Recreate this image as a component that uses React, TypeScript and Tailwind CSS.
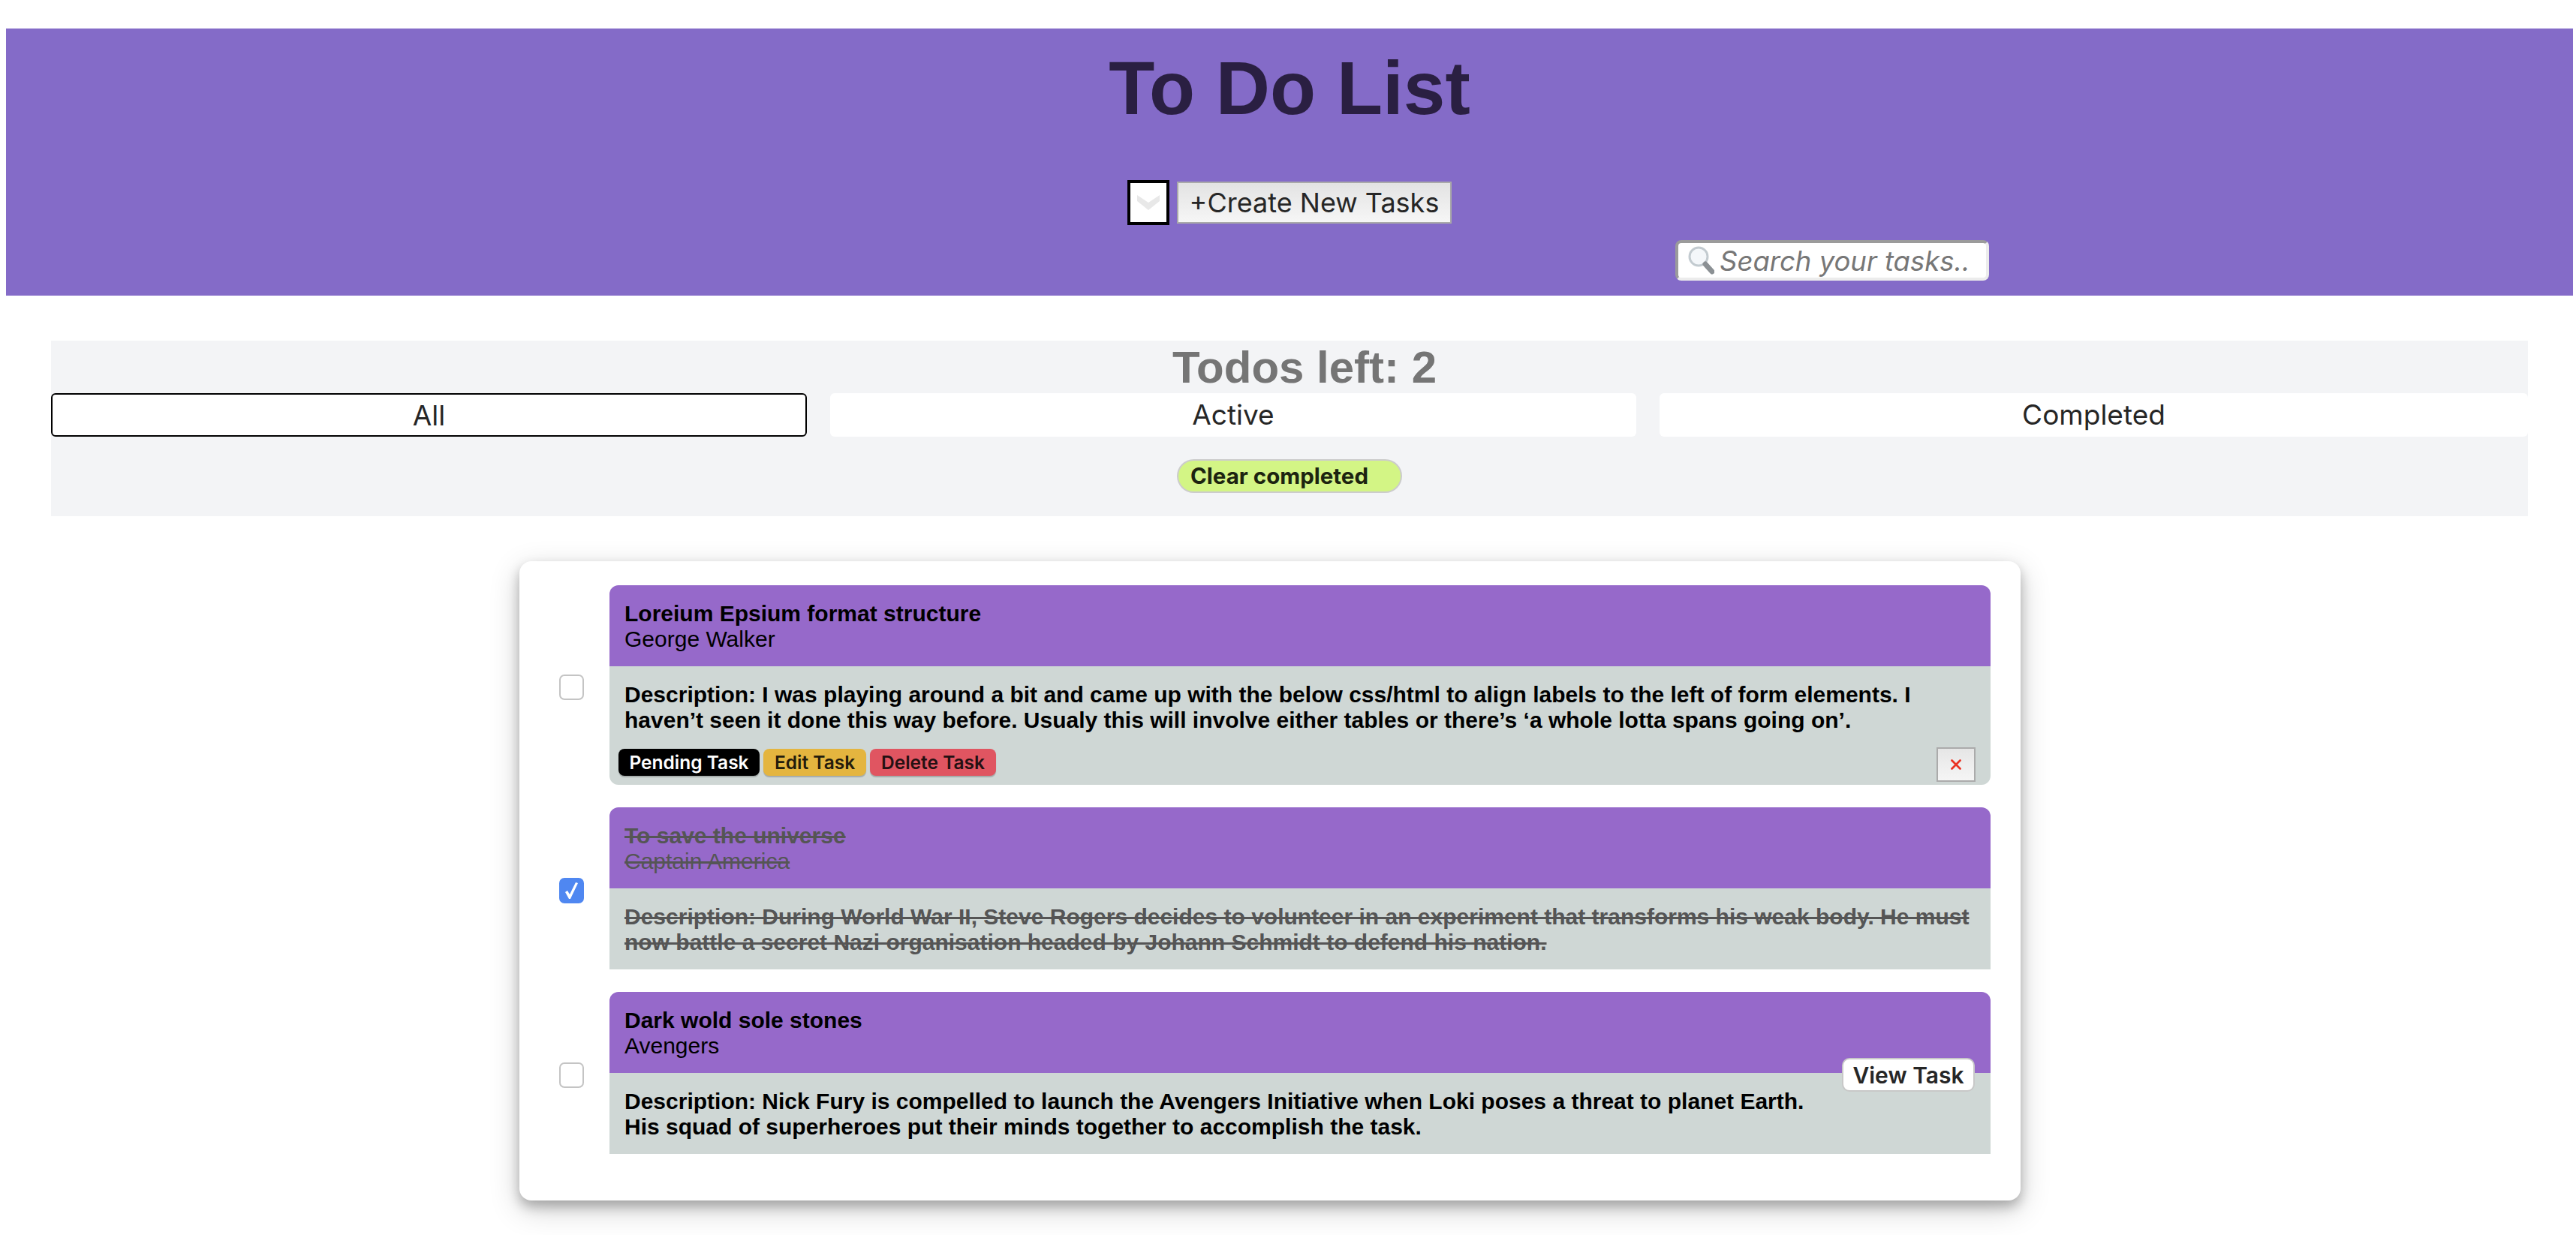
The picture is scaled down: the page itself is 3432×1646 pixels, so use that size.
import React from 'react';
import { X } from 'lucide-react';

const SearchGlass = () => (
    <svg width="36" height="38" viewBox="0 0 36 38" className="shrink-0">
        <circle cx="15" cy="14" r="12" fill="#f4f7fa" stroke="#c3cbd0" strokeWidth="3" />
        <path d="M24 24 L33 34" stroke="#8b9094" strokeWidth="7" strokeLinecap="round" />
    </svg>
);

type Task = {
    title: string;
    author: string;
    lines: string[];
    done?: boolean;
};

const tasks: Task[] = [
    {
        title: 'Loreium Epsium format structure',
        author: 'George Walker',
        lines: [
            'Description: I was playing around a bit and came up with the below css/html to align labels to the left of form elements. I',
            'haven’t seen it done this way before. Usualy this will involve either tables or there’s ‘a whole lotta spans going on’.',
        ],
    },
    {
        title: 'To save the universe',
        author: 'Captain America',
        done: true,
        lines: [
            'Description: During World War II, Steve Rogers decides to volunteer in an experiment that transforms his weak body. He must',
            'now battle a secret Nazi organisation headed by Johann Schmidt to defend his nation.',
        ],
    },
    {
        title: 'Dark wold sole stones',
        author: 'Avengers',
        lines: [
            'Description: Nick Fury is compelled to launch the Avengers Initiative when Loki poses a threat to planet Earth.',
            'His squad of superheroes put their minds together to accomplish the task.',
        ],
    },
];

const TaskRow: React.FC<{ task: Task; index: number }> = ({ task, index }) => {
    const textClass = task.done ? 'line-through text-[#555555]' : 'text-black';

    return (
        <div className="flex items-center">
            <div className="w-[120px] flex pl-[53px] pt-[6px]">
                {task.done ? (
                    <span className="w-[33px] h-[34px] rounded-[7px] bg-[#4f87f1] flex items-center justify-center">
                        <svg width="33" height="34" viewBox="0 0 33 34">
                            <path d="M8 19 L11 17 L14 22 L22 6 L25 7 L15 28 L13 28 Z" fill="#ffffff" />
                        </svg>
                    </span>
                ) : (
                    <span className="w-[33px] h-[34px] rounded-[7px] bg-white border-2 border-[#c4c4c4]" />
                )}
            </div>
            <div className="relative w-[1840px]">
                <div className={`bg-[#9669ca] rounded-t-[12px] h-[108px] pl-[20px] pt-[21px] text-[30px] leading-[34px] ${textClass}`}>
                    <div className="font-bold">{task.title}</div>
                    <div>{task.author}</div>
                </div>
                <div className={`bg-[#cfd7d5] ${index === 0 ? 'rounded-b-[12px] h-[158px]' : 'h-[108px]'} pl-[20px] pt-[21px] text-[30px] leading-[34px] font-bold ${textClass}`}>
                    {task.lines.map((line) => (
                        <div key={line} className="whitespace-nowrap">{line}</div>
                    ))}
                    {index === 0 && (
                        <div className="flex gap-[5px] mt-[21px] -ml-[8px] font-['Inter',sans-serif] text-[24.5px] leading-[36px] font-semibold">
                            <button className="w-[188px] h-[36px] rounded-[8px] bg-black text-white shadow-[0_2px_1px_rgba(0,0,0,0.2)]">Pending Task</button>
                            <button className="w-[137px] h-[36px] rounded-[8px] bg-[#e4b53f] text-[#241c0c] shadow-[0_2px_1px_rgba(0,0,0,0.2)]">Edit Task</button>
                            <button className="w-[168px] h-[36px] rounded-[8px] bg-[#e05561] text-[#241012] shadow-[0_2px_1px_rgba(0,0,0,0.2)]">Delete Task</button>
                        </div>
                    )}
                </div>
                {index === 0 && (
                    <button className="absolute right-[20px] bottom-[4px] w-[52px] h-[46px] border-2 border-[#ababab] bg-gradient-to-b from-[#e6e6e6] to-[#f5f5f5] flex items-center justify-center">
                        <X className="w-[22px] h-[22px] text-[#ea3323]" strokeWidth={3} />
                    </button>
                )}
                {index === 2 && (
                    <button className="absolute right-[21px] top-[88px] w-[177px] h-[45px] rounded-[10px] border-2 border-[#c8c8c8] bg-white font-['Inter',sans-serif] text-[30px] leading-none font-semibold text-[#262626]">
                        View Task
                    </button>
                )}
            </div>
        </div>
    );
};

export default function App() {
    return (
        <div className="min-h-[1646px] bg-white pt-[38px] font-['Liberation_Sans',Arial,sans-serif] overflow-hidden">
            {/* Header */}
            <header className="ml-[8px] mr-[4px] h-[356px] bg-[#846bc8] flex flex-col items-center">
                <h1 className="mt-[15px] text-[100px] leading-[128px] font-bold text-[#2a1f42]">To Do List</h1>
                <div className="mt-[59px] flex items-center gap-[10px]">
                    <span className="w-[56px] h-[60px] border-[4px] border-black bg-white flex items-center justify-center">
                        <svg width="30" height="20" viewBox="0 0 30 20">
                            <path d="M0 0 L15 10 L30 0 L30 8 L15 20 L0 8 Z" fill="#e8e8e8" />
                        </svg>
                    </span>
                    <button className="w-[366px] h-[56px] border-2 border-[#a9a9a9] bg-gradient-to-b from-[#e3e3e3] to-[#f6f6f6] font-['Inter',sans-serif] text-[36px] leading-none text-[#262626]">
                        +Create New Tasks
                    </button>
                </div>
                <div className="self-start ml-[2224px] mt-[20px] w-[418px] h-[54px] rounded-[8px] border-[4px] border-t-[#9b9b9b] border-l-[#9b9b9b] border-b-[#ececec] border-r-[#ececec] bg-white flex items-center pl-[12px] gap-[7px]">
                    <SearchGlass />
                    <span className="pt-[3px] font-['Inter',sans-serif] italic text-[36.5px] leading-none text-[#777777] whitespace-nowrap">Search your tasks..</span>
                </div>
            </header>

            {/* Filter section */}
            <section className="mt-[60px] ml-[68px] mr-[64px] h-[234px] bg-[#f3f4f6] flex flex-col">
                <div className="h-[70px] text-center text-[60px] leading-[72px] font-bold text-[#757575] pl-[40px]">Todos left: 2</div>
                <div className="flex gap-[31px] font-['Inter',sans-serif] text-[37px] text-[#262626]">
                    <button className="w-[1007px] h-[58px] rounded-[6px] border-2 border-black bg-white">All</button>
                    <button className="w-[1074px] h-[58px] rounded-[6px] bg-white">Active</button>
                    <button className="flex-1 h-[58px] rounded-[6px] bg-white">Completed</button>
                </div>
                <div className="flex justify-center mt-[30px]">
                    <button className="w-[300px] h-[45px] rounded-full bg-[#d3f585] border-2 border-[#cccccc] pl-[16px] text-left font-['Inter',sans-serif] text-[29.5px] leading-none font-bold text-[#1c2410] whitespace-nowrap">
                        Clear completed
                    </button>
                </div>
            </section>

            {/* Task card */}
            <main className="mt-[60px] ml-[692px] w-[2000px] h-[852px] rounded-[16px] bg-white pt-[32px] flex flex-col gap-[30px] shadow-[0_8px_16px_rgba(0,0,0,0.26),0_12px_40px_rgba(0,0,0,0.19)]">
                {tasks.map((task, index) => (
                    <TaskRow key={task.title} task={task} index={index} />
                ))}
            </main>
        </div>
    );
}
